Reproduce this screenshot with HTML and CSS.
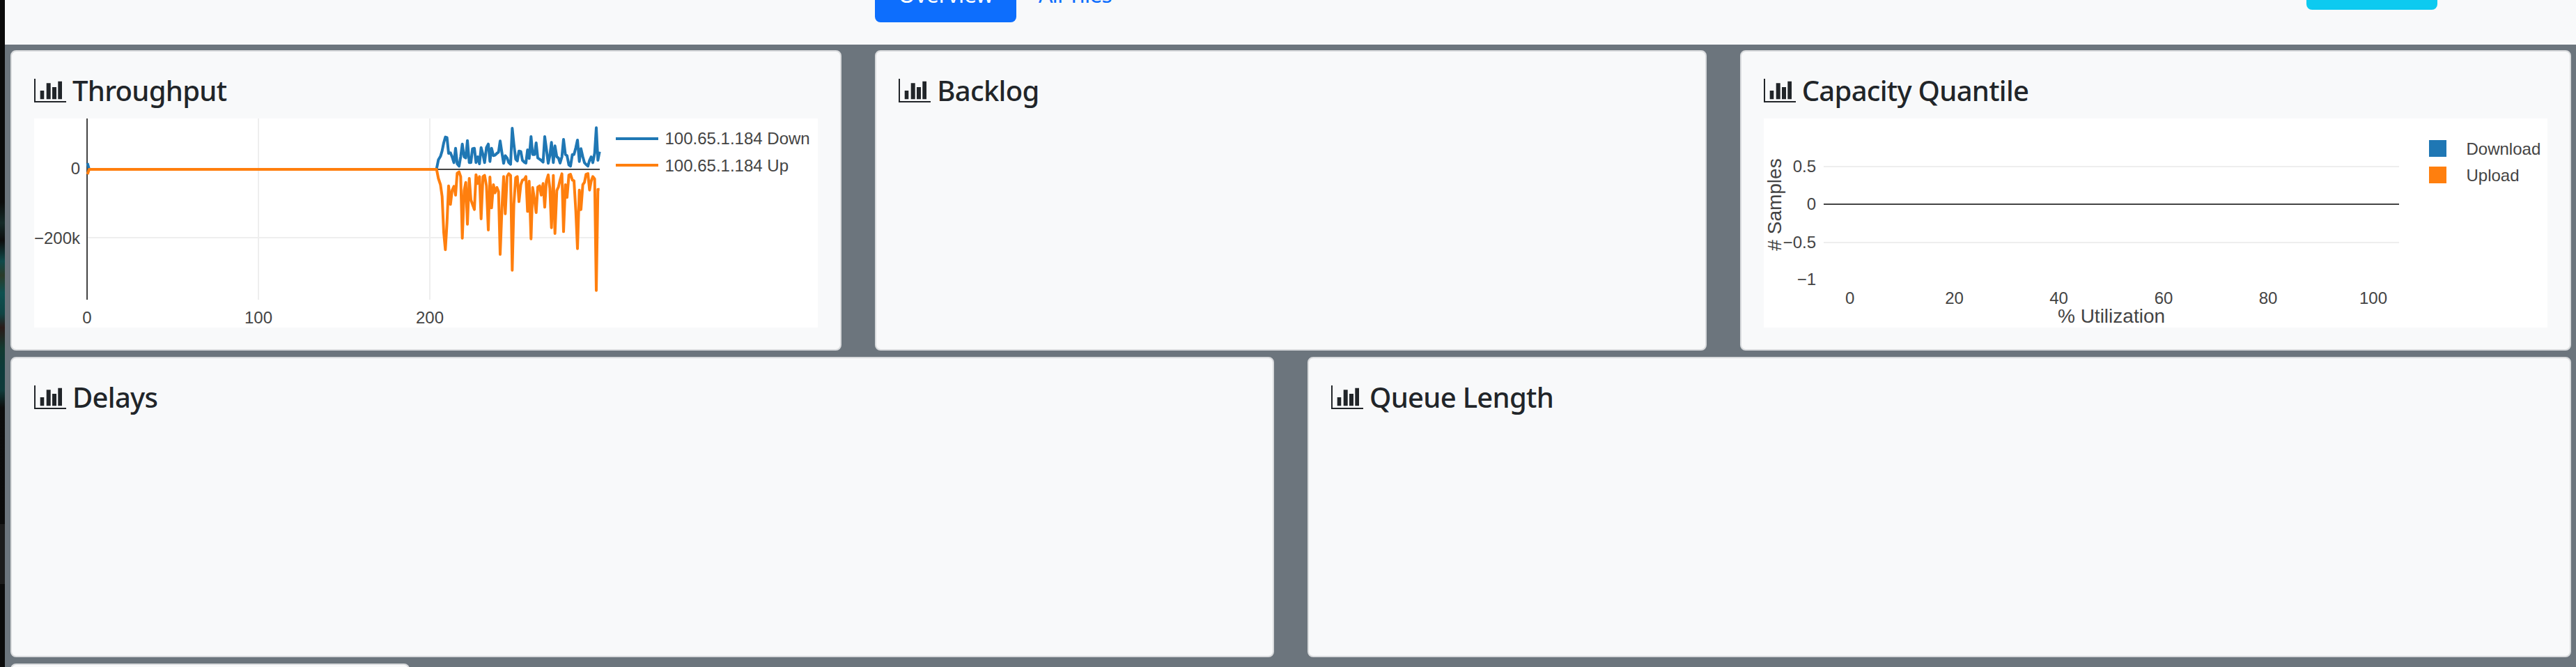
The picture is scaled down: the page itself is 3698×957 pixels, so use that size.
FILE: index.html
```html
<!DOCTYPE html>
<html lang="en">
<head>
<meta charset="utf-8">
<title>Dashboard</title>
<link rel="stylesheet" href="styles.css">
</head>
<body>
<div class="page">
  <header class="topbar">
    <nav class="tabs">
      <a class="tab tab-active">Overview</a>
      <a class="tab tab-link">All Tiles</a>
    </nav>
    <button class="edit-btn" type="button"></button>
  </header>

  <section class="row row-three">
    <article class="card">
      <h5 class="card-title"><svg class="bars" viewBox="0 0 46 34"><path d="M0 0h2v32h44v2H0Z"/><path d="M8.700 17h5.600v12.300H8.700ZM17.700 6.300h6v23h-6ZM26 12h6v17.300h-6ZM34.300 3.700H40v25.600h-5.700Z"/></svg>Throughput</h5>
      <svg class="plot" viewBox="0 0 1125 300">
        <rect class="plot-bg" width="1125" height="300"/>
        <path class="grid" d="M322 0V260M568 0V260M76 171H812"/>
        <path class="axis" d="M76 0V260"/>
        <path class="axis" d="M579 73H812"/>
        <text class="tick end" x="66" y="80">0</text>
        <text class="tick end" x="66" y="180">−200k</text>
        <text class="tick mid" x="76" y="294">0</text>
        <text class="tick mid" x="322" y="294">100</text>
        <text class="tick mid" x="568" y="294">200</text>
        <path class="trace blue" d="M76.500 64L79 73"/>
        <g transform="translate(551 0) scale(.33333)">
          <polyline class="trace-z blue" points="80,218 88,178 97,163 104,140 111,105 118,80 125,82 132,150 140,148 147,165 155,190 162,128 169,195 177,205 184,165 191,110 199,165 206,170 213,95 221,190 228,190 235,130 243,128 250,190 257,165 265,195 272,125 280,155 287,190 295,125 303,110 310,185 317,128 325,160 332,158 340,150 347,145 354,97 362,150 369,193 376,160 384,170 391,190 399,197 406,42 413,110 421,175 428,183 435,140 443,142 450,180 458,188 465,192 472,135 479,172 487,78 494,155 502,155 509,105 516,170 524,175 531,180 539,188 546,78 553,130 561,193 568,160 575,103 583,190 590,118 598,165 605,170 612,192 620,165 627,90 635,155 642,160 650,200 657,205 665,155 672,155 680,125 687,93 695,185 702,130 710,165 717,190 724,198 732,205 739,180 746,165 753,190 761,150 768,40 775,180 782,143"/>
        </g>
        <path class="trace orange" d="M76.500 80L79 73H579"/>
        <g transform="translate(551 0) scale(.33333)">
          <polyline class="trace-z orange" points="80,218 88,258 97,285 104,335 111,490 118,565 125,450 132,290 140,370 147,310 155,292 162,330 169,235 177,230 184,250 191,515 199,310 206,275 213,455 221,258 228,350 235,370 243,392 250,242 257,280 265,250 272,432 280,250 287,245 295,290 303,480 310,252 317,385 325,285 332,320 340,297 347,315 354,585 362,380 369,250 376,410 384,250 391,238 399,245 406,653 413,370 421,255 428,250 435,358 443,285 450,265 458,262 465,250 472,400 479,270 487,518 494,297 502,350 509,405 516,295 524,290 531,330 539,280 546,382 553,270 561,243 568,300 575,470 583,245 590,495 598,310 605,295 612,265 620,238 627,487 635,285 642,340 650,243 657,240 665,265 672,268 680,400 687,560 695,308 702,392 710,285 717,275 724,240 732,237 739,308 746,270 753,250 761,260 768,740 775,305 782,305"/>
        </g>
        <path class="trace blue" d="M835 29H896"/>
        <path class="trace orange" d="M835 67H896"/>
        <text class="tick" x="905.500" y="37">100.65.1.184 Down</text>
        <text class="tick" x="905.500" y="75.500">100.65.1.184 Up</text>
      </svg>
    </article>

    <article class="card">
      <h5 class="card-title"><svg class="bars" viewBox="0 0 46 34"><path d="M0 0h2v32h44v2H0Z"/><path d="M8.700 17h5.600v12.300H8.700ZM17.700 6.300h6v23h-6ZM26 12h6v17.300h-6ZM34.300 3.700H40v25.600h-5.700Z"/></svg>Backlog</h5>
    </article>

    <article class="card">
      <h5 class="card-title"><svg class="bars" viewBox="0 0 46 34"><path d="M0 0h2v32h44v2H0Z"/><path d="M8.700 17h5.600v12.300H8.700ZM17.700 6.300h6v23h-6ZM26 12h6v17.300h-6ZM34.300 3.700H40v25.600h-5.700Z"/></svg>Capacity Quantile</h5>
      <svg class="plot" viewBox="0 0 1125 300">
        <rect class="plot-bg" width="1125" height="300"/>
        <path class="grid" d="M86 69H912M86 178H912"/>
        <path class="axis" d="M86 123H912"/>
        <text class="tick end" x="75" y="76.700">0.5</text>
        <text class="tick end" x="75" y="130.700">0</text>
        <text class="tick end" x="75" y="186">−0.5</text>
        <text class="tick end" x="75" y="239">−1</text>
        <text class="tick mid" x="123.600" y="265.700">0</text>
        <text class="tick mid" x="273.600" y="265.700">20</text>
        <text class="tick mid" x="423.500" y="265.700">40</text>
        <text class="tick mid" x="574" y="265.700">60</text>
        <text class="tick mid" x="724" y="265.700">80</text>
        <text class="tick mid" x="875" y="265.700">100</text>
        <text class="title mid" x="499" y="293">% Utilization</text>
        <text class="title mid" transform="translate(24.500 123.500) rotate(-90)"># Samples</text>
        <rect class="swatch-blue" x="955" y="31" width="25" height="24"/>
        <rect class="swatch-orange" x="955" y="69" width="25" height="24"/>
        <text class="tick" x="1008.500" y="51.700">Download</text>
        <text class="tick" x="1008.500" y="90">Upload</text>
      </svg>
    </article>
  </section>

  <section class="row row-two">
    <article class="card">
      <h5 class="card-title"><svg class="bars" viewBox="0 0 46 34"><path d="M0 0h2v32h44v2H0Z"/><path d="M8.700 17h5.600v12.300H8.700ZM17.700 6.300h6v23h-6ZM26 12h6v17.300h-6ZM34.300 3.700H40v25.600h-5.700Z"/></svg>Delays</h5>
    </article>
    <article class="card">
      <h5 class="card-title"><svg class="bars" viewBox="0 0 46 34"><path d="M0 0h2v32h44v2H0Z"/><path d="M8.700 17h5.600v12.300H8.700ZM17.700 6.300h6v23h-6ZM26 12h6v17.300h-6ZM34.300 3.700H40v25.600h-5.700Z"/></svg>Queue Length</h5>
    </article>
  </section>

  <section class="row row-six">
    <article class="card"></article>
  </section>
</div>
</body>
</html>
```
FILE: styles.css
```css
html, body {
  margin: 0;
  height: 957px;
  overflow: hidden;
}
body {
  background: linear-gradient(180deg,
    #0b0b0b 0, #0b0b0b 290px, #142a28 320px, #0c0c0c 345px,
    #0f4a4a 375px, #2a3a28 395px, #0e5050 420px, #0f4444 450px,
    #2a1a18 470px, #123a30 500px, #0d3a3a 530px, #0f3a3a 560px,
    #0c0c0c 585px, #0b0b0b 752px, #1c1c1c 752px, #1c1c1c 838px,
    #0b0b0b 838px, #0b0b0b 957px);
}
.page {
  margin-left: 7px;
  height: 957px;
  overflow: hidden;
  background: #6c757d;
  font-family: "Noto Sans", "Open Sans", sans-serif;
  color: #212529;
}
.topbar {
  height: 64px;
  overflow: hidden;
  background: #f8f9fa;
  display: flex;
  align-items: flex-start;
  padding-left: 1249px;
  padding-right: 199px;
}
.tabs {
  display: flex;
  margin-top: -48px;
}
.tab {
  display: block;
  height: 80px;
  line-height: 80px;
  padding: 0 32px;
  border-radius: 8px;
  font-size: 32px;
  letter-spacing: -0.4px;
  color: #0d6efd;
}
.tab-link { letter-spacing: -0.9px; }
.tab-active {
  width: 203px;
  box-sizing: border-box;
  text-align: center;
  padding: 0;
  color: #fff;
  background: #0d6efd;
}
.edit-btn {
  margin-left: auto;
  margin-top: -66px;
  width: 188px;
  height: 80px;
  border: 0;
  border-radius: 8px;
  background: #0dcaf0;
}
.row {
  display: grid;
  gap: 48px;
  margin: 0 7px 0 8px;
  padding-top: 9px;
}
.row-three {
  grid-template-columns: repeat(3, 1fr);
  padding-top: 8px;
}
.row-two { grid-template-columns: repeat(2, 1fr); }
.row-six { grid-template-columns: repeat(6, 1fr); }
.card {
  box-sizing: border-box;
  height: 431px;
  padding: 32px 32px 0;
  background: #f8f9fa;
  border: 2px solid #d9dbdd;
  border-radius: 8px;
}
.card-title {
  display: flex;
  align-items: flex-start;
  height: 64px;
  margin: 0;
  font-size: 40px;
  font-weight: 500;
  line-height: 48px;
  letter-spacing: -0.7px;
  white-space: nowrap;
}
.bars {
  width: 46px;
  height: 34px;
  margin: 7px 9px 0 0;
  fill: #212529;
  flex: none;
}
.plot {
  display: block;
  width: 1125px;
  height: 300px;
}
.plot-bg { fill: #fff; }
.grid { fill: none; stroke: #eee; stroke-width: 2; }
.axis { fill: none; stroke: #444; stroke-width: 2; }
.trace { fill: none; stroke-width: 4; stroke-linejoin: round; }
.trace-z { fill: none; stroke-width: 12; stroke-linejoin: round; }
.blue { stroke: #1f77b4; }
.orange { stroke: #ff7f0e; }
.swatch-blue { fill: #1f77b4; }
.swatch-orange { fill: #ff7f0e; }
.tick {
  font: 24px "Liberation Sans", Arial, sans-serif;
  fill: #444;
}
.title {
  font: 28px "Liberation Sans", Arial, sans-serif;
  fill: #444;
}
.mid { text-anchor: middle; }
.end { text-anchor: end; }
```
